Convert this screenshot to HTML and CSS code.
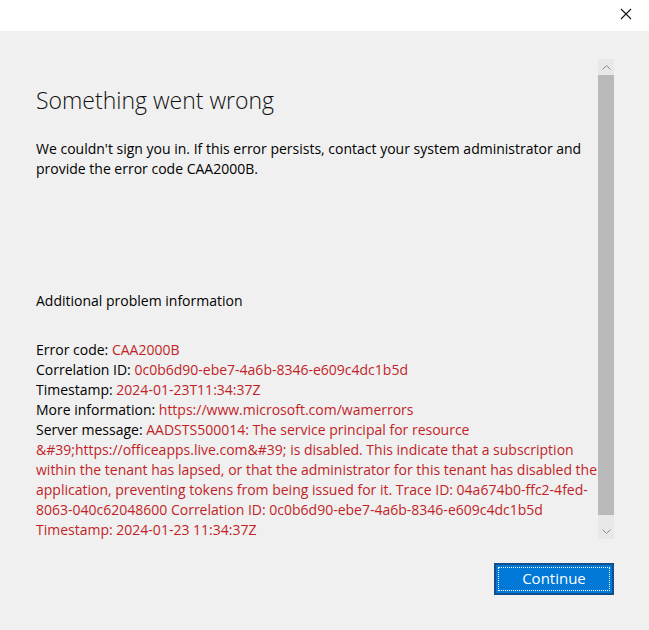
FILE: index.html
```html
<!DOCTYPE html>
<html lang="en">
<head>
    <meta charset="UTF-8">
    <title>Something went wrong</title>
    <link rel="stylesheet" href="styles.css">
</head>
<body>
    <div class="titlebar">
        <div class="close">
            <svg width="12" height="12" viewBox="0 0 12 12"><path d="M1 1L11 11M11 1L1 11" stroke="#111" stroke-width="1.1" fill="none"/></svg>
        </div>
    </div>
    <div class="main">
        <div class="content">
            <h1 class="title">Something went wrong</h1>
            <p class="lead">We couldn't sign you in. If this error persists, contact your system administrator and<br>provide the error code CAA2000B.</p>
            <p class="sub">Additional problem information</p>
            <div class="details">
                <div>Error code: <span class="err">CAA2000B</span></div>
                <div>Correlation ID: <span class="err">0c0b6d90-ebe7-4a6b-8346-e609c4dc1b5d</span></div>
                <div>Timestamp: <span class="err">2024-01-23T11:34:37Z</span></div>
                <div>More information: <span class="err">https://www.microsoft.com/wamerrors</span></div>
                <div>Server message: <span class="err">AADSTS500014: The service principal for resource<br>&amp;#39;https://officeapps.live.com&amp;#39; is disabled. This indicate that a subscription<br>within the tenant has lapsed, or that the administrator for this tenant has disabled the<br>application, preventing tokens from being issued for it. Trace ID: 04a674b0-ffc2-4fed-<br>8063-040c62048600 Correlation ID: 0c0b6d90-ebe7-4a6b-8346-e609c4dc1b5d<br>Timestamp: 2024-01-23 11:34:37Z</span></div>
            </div>
        </div>
        <div class="scrollbar">
            <div class="arrow">
                <svg width="9" height="5" viewBox="0 0 9 5"><path d="M0.5 4.5L4.5 0.5L8.5 4.5" stroke="#8a8a8a" fill="none"/></svg>
            </div>
            <div class="thumb"></div>
            <div class="arrow">
                <svg width="9" height="5" viewBox="0 0 9 5"><path d="M0.5 0.5L4.5 4.5L8.5 0.5" stroke="#8a8a8a" fill="none"/></svg>
            </div>
        </div>
    </div>
    <div class="footer">
        <button class="btn">Continue</button>
    </div>
</body>
</html>
```

FILE: styles.css
```css
body {
    margin: 0;
    background: #f0f0f0;
    font-family: "Open Sans", "Noto Sans", sans-serif;
    color: #000;
}
.titlebar {
    height: 31px;
    background: #fff;
    display: flex;
    justify-content: flex-end;
}
.close {
    width: 46px;
    height: 31px;
    display: flex;
    align-items: center;
    justify-content: center;
    margin-top: -2px;
}
.main {
    display: flex;
    height: 480px;
    margin-top: 28px;
    padding: 0 35px 0 36px;
}
.content {
    flex: 1;
    font-size: 14px;
    line-height: 20px;
    white-space: nowrap;
}
.title {
    margin: 25px 0 0;
    font-size: 23px;
    font-weight: 300;
    line-height: 32px;
    color: #111;
}
.lead {
    margin: 23px 0 0;
}
.sub {
    margin: 112px 0 0;
}
.details {
    margin-top: 29px;
}
.err {
    color: #c21f27;
}
.scrollbar {
    width: 16px;
    display: flex;
    flex-direction: column;
    background: #e8e8e8;
}
.arrow {
    height: 16px;
    display: flex;
    align-items: center;
    justify-content: center;
}
.thumb {
    flex: 1;
    background: #b9b9b9;
    margin-bottom: 8px;
}
.footer {
    display: flex;
    justify-content: flex-end;
    padding: 24px 35px 0 0;
}
.btn {
    width: 120px;
    height: 32px;
    background: #0078d7;
    border: 2px solid #0e4f8c;
    outline: 1px dotted #fff;
    outline-offset: -5px;
    color: #fff;
    font: 15px/26px "Open Sans", sans-serif;
    padding: 0 0 2px;
}
```
